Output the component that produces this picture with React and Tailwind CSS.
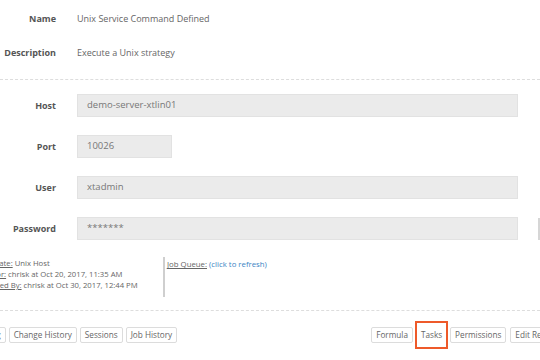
import React from 'react';

const Field = ({ label, value, width = 'w-[441px]', extra }) => (
    <div className="flex items-center">
        <div className="w-[56px] shrink-0 text-right text-[9px] font-bold text-[#555]">{label}</div>
        <div className={`ml-[21px] ${width} h-[23px] shrink-0 flex items-center px-[9px] bg-[#ebebeb] border border-[#e2e2e2] text-[9.5px] text-[#777]`}>
            {value}
        </div>
        {extra}
    </div>
);

const Btn = ({ children, className = 'px-[4px]' }) => (
    <div className={`h-[16px] shrink-0 flex items-center border border-[#dcdcdc] rounded-[2px] bg-white text-[8.2px] text-[#666] whitespace-nowrap ${className}`}>
        {children}
    </div>
);

const App = () => {
    return (
        <div className="w-[540px] h-[360px] overflow-hidden bg-white font-['Open_Sans',sans-serif] relative">
            <div className="pt-[2px]">
                <div className="flex items-center h-[34px]">
                    <div className="w-[56px] text-right text-[9px] font-bold text-[#555]">Name</div>
                    <div className="ml-[21px] text-[9px] text-[#666]">Unix Service Command Defined</div>
                </div>
                <div className="flex items-center h-[34px]">
                    <div className="w-[56px] text-right text-[9px] font-bold text-[#555] whitespace-nowrap">Description</div>
                    <div className="ml-[21px] text-[9px] text-[#666]">Execute a Unix strategy</div>
                </div>
            </div>

            <div className="mt-[9px] border-t border-dashed border-[#dddddd]" />

            <div className="mt-[14px] flex flex-col gap-[18px]">
                <Field label="Host" value="demo-server-xtlin01" />
                <Field label="Port" value="10026" width="w-[95px]" />
                <Field label="User" value="xtadmin" />
                <Field
                    label="Password"
                    value="*******"
                    extra={<div className="ml-[20px] w-[2px] h-[22px] bg-[#d6d6d6]" />}
                />
            </div>

            <div className="mt-[17px] flex items-start">
                <div className="-ml-[23px] w-[184px] shrink-0 pt-[1px] text-[7.7px] leading-[11px] text-[#666] whitespace-nowrap">
                    <div><span className="underline">Template:</span> Unix Host</div>
                    <div><span className="underline">Creator:</span> chrisk at Oct 20, 2017, 11:35 AM</div>
                    <div><span className="underline">Modified By:</span> chrisk at Oct 30, 2017, 12:44 PM</div>
                </div>
                <div className="ml-[2px] h-[40px] border-l-2 border-[#cfcfcf] pl-[2px] pt-[2px] text-[7.8px] leading-[11px] text-[#666] whitespace-nowrap">
                    <span className="underline">Job Queue:</span> <span className="text-[#3b84c4]">(click to refresh)</span>
                </div>
            </div>

            <div className="mt-[13px] border-t border-dashed border-[#dddddd]" />

            <div className="mt-[16px] flex items-center">
                <div className="flex gap-[3px] -ml-[34px]">
                    <Btn>Logging</Btn>
                    <Btn>Change History</Btn>
                    <Btn>Sessions</Btn>
                    <Btn>Job History</Btn>
                </div>
                <div className="ml-[194px] flex gap-[4px]">
                    <Btn>Formula</Btn>
                    <div className="relative">
                        <Btn className="px-[3px] border-transparent">Tasks</Btn>
                        <div className="absolute -left-[2px] -right-[2px] -top-[6px] -bottom-[6px] border-2 border-[#ee5a2a]" />
                    </div>
                    <Btn>Permissions</Btn>
                    <Btn>Edit Record</Btn>
                </div>
            </div>
        </div>
    );
};

export default App;
